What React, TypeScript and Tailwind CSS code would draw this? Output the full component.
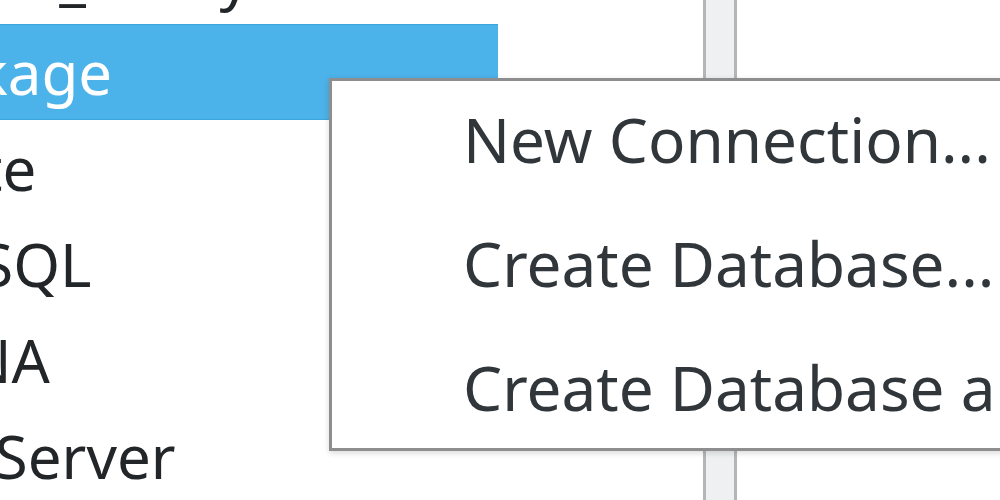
const rows = [
  { label: "Oracle_Utility", offset: "ml-[-123px]", selected: false },
  { label: "Package", offset: "ml-[-123px]", selected: true },
  { label: "SQLite", offset: "ml-[-146px]", selected: false },
  { label: "PostgreSQL", offset: "ml-[-237px]", selected: false },
  { label: "SAP HANA", offset: "ml-[-240px]", selected: false },
  { label: "SQL Server", offset: "ml-[-132px]", selected: false },
]

const menuItems = ["New Connection...", "Create Database...", "Create Database and Connection..."]

export default function App() {
  return (
    <div
      className="relative w-[1000px] h-[500px] overflow-hidden bg-white"
      style={{ fontFamily: '"Noto Sans", "Open Sans", sans-serif' }}
    >
      <div className="flex h-full">
        {/* tree */}
        <div className="w-[498px] mt-[-72px] flex flex-col overflow-hidden">
          {rows.map((row) => (
            <div
              key={row.label}
              className={
                row.selected
                  ? "h-[96px] shrink-0 bg-[#4cb2ea] border-y border-[#3aa6e0] text-white text-[60px] leading-[94px] whitespace-nowrap"
                  : "h-[96px] shrink-0 text-[#232629] text-[60px] leading-[96px] whitespace-nowrap"
              }
            >
              <span className={"block " + row.offset}>{row.label}</span>
            </div>
          ))}
        </div>

        {/* scrollbar */}
        <div className="ml-[205px] w-[34px] h-full shrink-0 bg-[#eef0f1] border-x-[3px] border-[#b3b5b7]" />
      </div>

      {/* context menu */}
      <div className="absolute left-[329px] top-[78px] w-[720px] h-[373px] bg-white border-[3px] border-[#8e8e8e] shadow-[0_2px_6px_rgba(0,0,0,0.15)]">
        <div className="flex flex-col gap-[8px] pl-[131px]">
          {menuItems.map((item) => (
            <div key={item} className="h-[116px] text-[62px] leading-[116px] text-[#31363b] whitespace-nowrap">
              {item}
            </div>
          ))}
        </div>
      </div>
    </div>
  )
}
